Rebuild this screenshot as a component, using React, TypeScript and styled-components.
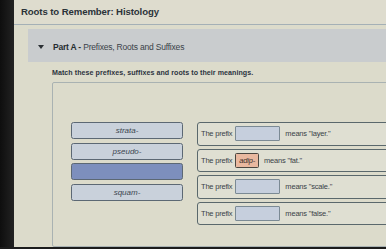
import React from "react";
import styled, { createGlobalStyle } from "styled-components";

const Global = createGlobalStyle`
  html, body { margin: 0; padding: 0; background: #161616; }
  body { font-family: "Liberation Sans", Arial, sans-serif; }
`;

const Screen = styled.div`
  width: 386px;
  height: 249px;
  display: flex;
  flex-direction: column;
  overflow: hidden;
  background: #161616;
`;

const Body = styled.div`
  display: flex;
  height: 247px;
`;

const LeftBezel = styled.div`
  width: 14px;
  flex: none;
  background: linear-gradient(90deg, #0e0e0e, #222222);
`;

const Main = styled.div`
  flex: 1;
  display: flex;
  flex-direction: column;
  background: #dcdbcb;
  overflow: hidden;
  min-width: 0;
`;

const TitleBar = styled.div`
  height: 25px;
  flex: none;
  display: flex;
  align-items: center;
  padding-left: 7px;
  padding-bottom: 2px;
  box-sizing: border-box;
  font-size: 9.6px;
  font-weight: bold;
  color: #2b3238;
  background: #dedcce;
  border-bottom: 1.5px solid #a4b0b6;
  letter-spacing: -0.1px;
`;

const PartHeader = styled.div`
  margin: 4px 0 0 14px;
  height: 33px;
  flex: none;
  display: flex;
  align-items: center;
  gap: 9px;
  padding-left: 10px;
  padding-top: 2px;
  box-sizing: border-box;
  background: #c9ccce;
  font-size: 8.5px;
  color: #3a4248;
  letter-spacing: -0.2px;
`;

const Caret = styled.span`
  width: 0;
  height: 0;
  border-left: 3px solid transparent;
  border-right: 3px solid transparent;
  border-top: 4px solid #2a2f34;
`;

const Strong = styled.span`
  font-weight: bold;
  color: #262c30;
`;

const Instruction = styled.div`
  margin: 7px 0 0 38px;
  font-size: 7.1px;
  font-weight: bold;
  color: #2c3440;
  letter-spacing: 0.05px;
`;

const Panel = styled.div`
  margin: 5px 0 0 38px;
  width: 400px;
  flex: 1;
  border: 1px solid #a9b2b2;
  border-radius: 2px;
  box-sizing: border-box;
  padding: 39px 0 0 18px;
  display: flex;
  gap: 14px;
  align-items: flex-start;
`;

const TileColumn = styled.div`
  width: 112px;
  display: flex;
  flex-direction: column;
  gap: 3.5px;
`;

const Tile = styled.div<{ $active?: boolean }>`
  height: 17px;
  box-sizing: border-box;
  border: 1px solid #5c6874;
  border-radius: 2.5px;
  background: ${(p) => (p.$active ? "#7d8fbd" : "#c9d1db")};
  display: flex;
  align-items: center;
  justify-content: center;
  font-size: 8px;
  font-style: italic;
  color: #3c4650;
`;

const RowColumn = styled.div`
  width: 200px;
  display: flex;
  flex-direction: column;
  gap: 3px;
`;

const Row = styled.div`
  height: 23.5px;
  box-sizing: border-box;
  border: 1.5px solid #5a686c;
  border-radius: 3px;
  background: #dfdfd2;
  display: flex;
  align-items: center;
  padding-left: 3px;
  font-size: 7.5px;
  color: #3a4248;
  letter-spacing: -0.2px;
`;

const DropBox = styled.div`
  width: 45px;
  height: 15px;
  box-sizing: border-box;
  margin: 0 5px 0 3px;
  border: 1px solid #7b8a94;
  border-radius: 1px;
  background: #c6cfdd;
`;

const Filled = styled.div`
  height: 15px;
  box-sizing: border-box;
  margin: 0 5px 0 3px;
  padding: 0 3px;
  display: flex;
  align-items: center;
  border: 1.5px solid #4a4640;
  border-radius: 1.5px;
  background: #e9b89f;
  font-style: italic;
  font-size: 7.5px;
  color: #3a2e2a;
`;

const BottomBezel = styled.div`
  height: 2px;
  background: #1c1c1c;
`;

const tiles = [
  { label: "strata-" },
  { label: "pseudo-" },
  { label: "", active: true },
  { label: "squam-" },
];

const rows = [
  { meaning: "layer." },
  { meaning: "fat.", filled: "adip-" },
  { meaning: "scale." },
  { meaning: "false." },
];

export default function App() {
  return (
    <>
      <Global />
      <Screen>
        <Body>
          <LeftBezel />
          <Main>
            <TitleBar>Roots to Remember: Histology</TitleBar>
            <PartHeader>
              <Caret />
              <span>
                <Strong>Part A -</Strong> Prefixes, Roots and Suffixes
              </span>
            </PartHeader>
            <Instruction>Match these prefixes, suffixes and roots to their meanings.</Instruction>
            <Panel>
              <TileColumn>
                {tiles.map((t, i) => (
                  <Tile key={i} $active={t.active}>
                    {t.label}
                  </Tile>
                ))}
              </TileColumn>
              <RowColumn>
                {rows.map((r, i) => (
                  <Row key={i}>
                    The prefix
                    {r.filled ? <Filled>{r.filled}</Filled> : <DropBox />}
                    means "{r.meaning}"
                  </Row>
                ))}
              </RowColumn>
            </Panel>
          </Main>
        </Body>
        <BottomBezel />
      </Screen>
    </>
  );
}
